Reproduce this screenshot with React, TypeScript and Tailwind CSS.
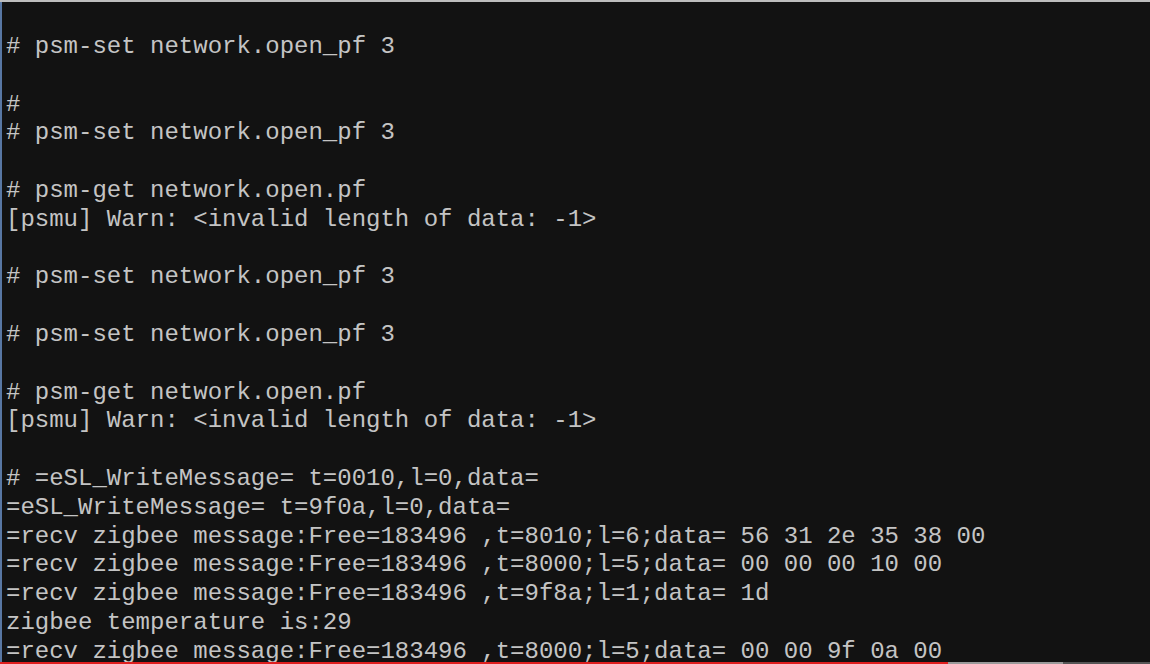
const lines = [
  "# psm-set network.open_pf 3",
  "",
  "#",
  "# psm-set network.open_pf 3",
  "",
  "# psm-get network.open.pf",
  "[psmu] Warn: <invalid length of data: -1>",
  "",
  "# psm-set network.open_pf 3",
  "",
  "# psm-set network.open_pf 3",
  "",
  "# psm-get network.open.pf",
  "[psmu] Warn: <invalid length of data: -1>",
  "",
  "# =eSL_WriteMessage= t=0010,l=0,data=",
  "=eSL_WriteMessage= t=9f0a,l=0,data=",
  "=recv zigbee message:Free=183496 ,t=8010;l=6;data= 56 31 2e 35 38 00",
  "=recv zigbee message:Free=183496 ,t=8000;l=5;data= 00 00 00 10 00",
  "=recv zigbee message:Free=183496 ,t=9f8a;l=1;data= 1d",
  "zigbee temperature is:29",
  "=recv zigbee message:Free=183496 ,t=8000;l=5;data= 00 00 9f 0a 00",
];

const App = () => {
  return (
    <div className="w-[1150px] h-[664px] flex flex-col bg-[#121212] overflow-hidden">
      <div className="h-[2px] bg-[#bdbdbd] shrink-0" />
      <div className="flex flex-1 min-h-0">
        <div className="w-[2px] bg-[#5877a3] shrink-0" />
        <pre className="flex-1 pl-[4px] pt-[31px] font-['Liberation_Mono','Courier_New',monospace] text-[24px] leading-[28.8px] text-[#c4c4c4] whitespace-pre overflow-hidden">
          {lines.map((line, i) => (
            <div key={i} className="h-[28.8px]">
              {line}
            </div>
          ))}
        </pre>
      </div>
      <div className="flex h-[2px] shrink-0">
        <div className="w-[948px] bg-[#e01e1e]" />
        <div className="w-[115px] bg-[#9a9a9a]" />
        <div className="flex-1 bg-[#555555]" />
      </div>
    </div>
  );
};

export default App;
